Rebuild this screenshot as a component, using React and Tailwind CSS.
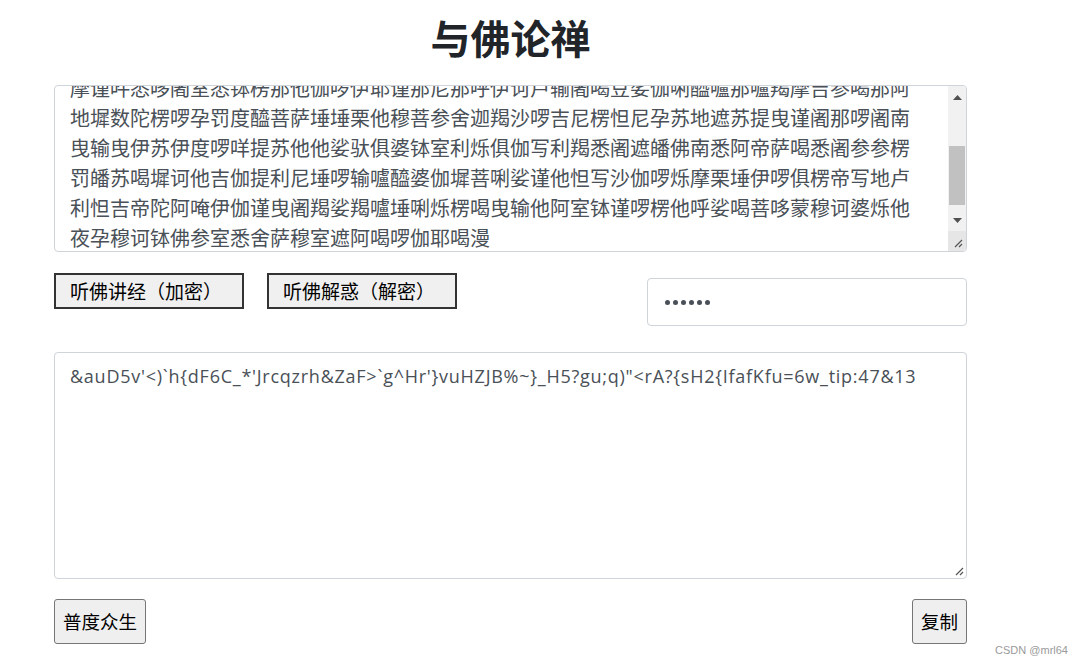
const cjk = { fontFamily: '"Noto Sans CJK SC", "Noto Sans", sans-serif' };

const lines = [
  "摩谨吽悉哆阇室悉钵楞那他伽啰伊耶谨那尼那呼伊诃卢输阇喝豆娑伽唎醯嚧那嚧羯摩吉参喝那阿",
  "地墀数陀楞啰孕罚度醯菩萨埵埵栗他穆菩参舍迦羯沙啰吉尼楞怛尼孕苏地遮苏提曳谨阇那啰阇南",
  "曳输曳伊苏伊度啰咩提苏他他娑驮俱婆钵室利烁俱伽写利羯悉阇遮皤佛南悉阿帝萨喝悉阇参参楞",
  "罚皤苏喝墀诃他吉伽提利尼埵啰输嚧醯婆伽墀菩唎娑谨他怛写沙伽啰烁摩栗埵伊啰俱楞帝写地卢",
  "利怛吉帝陀阿唵伊伽谨曳阇羯娑羯嚧埵唎烁楞喝曳输他阿室钵谨啰楞他呼娑喝菩哆蒙穆诃婆烁他",
  "夜孕穆诃钵佛参室悉舍萨穆室遮阿喝啰伽耶喝漫",
];

const cipher = `&auD5v'<)\`h{dF6C_*'Jrcqzrh&ZaF>\`g^Hr'}vuHZJB%~}_H5?gu;q)"<rA?{sH2{IfafKfu=6w_tip:47&13`;

function Grip() {
  return (
    <svg width="10" height="10" viewBox="0 0 10 10" className="block">
      <path d="M9 2 L2 9 M9 6 L6 9" stroke="#555" strokeWidth="1.2" />
    </svg>
  );
}

function Scrollbar() {
  return (
    <div className="flex w-[18px] shrink-0 flex-col bg-[#f1f1f1]">
      <div className="flex h-[22px] items-center justify-center">
        <svg width="9" height="5" viewBox="0 0 9 5">
          <path d="M0 5 L4.5 0 L9 5 Z" fill="#505050" />
        </svg>
      </div>
      <div className="flex-1 px-[1px] pt-[38px]">
        <div className="h-[59px] bg-[#c1c1c1]" />
      </div>
      <div className="flex h-[22px] items-center justify-center">
        <svg width="9" height="5" viewBox="0 0 9 5">
          <path d="M0 0 L4.5 5 L9 0 Z" fill="#505050" />
        </svg>
      </div>
      <div className="flex h-[20px] items-end justify-end bg-[#e6e6e6] p-[3px]">
        <Grip />
      </div>
    </div>
  );
}

function ClassicButton({ children }) {
  return (
    <button
      type="button"
      className="h-[36px] w-[190px] border-2 border-[#333] bg-[#f0f0f0] pl-[14px] text-left text-[19px] leading-[30px] text-black"
      style={cjk}
    >
      {children}
    </button>
  );
}

function PlainButton({ children }) {
  return (
    <button
      type="button"
      className="h-[45px] rounded-[3px] border border-[#767676] bg-[#efefef] px-[8px] text-[18.5px] text-black"
      style={cjk}
    >
      {children}
    </button>
  );
}

export default function App() {
  return (
    <div className="relative min-h-[667px] w-[1084px] bg-white">
      <div className="ml-[54px] w-[913px] pt-[13px]">
        <h1
          className="text-center text-[40px] font-bold leading-[48px] text-[#212529]"
          style={cjk}
        >
          与佛论禅
        </h1>

        <div className="mt-[24px] flex h-[167px] overflow-hidden rounded-[4px] border border-[#ced4da]">
          <div className="flex-1 overflow-hidden pl-[15px]">
            <div className="-mt-[13px] text-[20px] leading-[30px] text-[#495057]" style={cjk}>
              {lines.map((l, i) => (
                <div key={i} className="whitespace-nowrap">
                  {l}
                </div>
              ))}
            </div>
          </div>
          <Scrollbar />
        </div>

        <div className="flex items-start">
          <div className="mt-[21px] flex gap-[23px]">
            <ClassicButton>听佛讲经（加密）</ClassicButton>
            <ClassicButton>听佛解惑（解密）</ClassicButton>
          </div>
          <div className="ml-auto mt-[26px] flex h-[48px] w-[320px] items-center gap-[3px] rounded-[4px] border border-[#ced4da] px-[17px]">
            {[0, 1, 2, 3, 4, 5].map((i) => (
              <span key={i} className="h-[5px] w-[5px] rounded-full bg-[#495057]" />
            ))}
          </div>
        </div>

        <div className="mt-[26px] flex h-[227px] flex-col rounded-[4px] border border-[#ced4da]">
          <div
            className="flex-1 whitespace-nowrap px-[15px] pt-[8px] text-[18px] leading-[30px] tracking-[0.75px] text-[#495057]"
            style={{ fontFamily: '"Open Sans", "Noto Sans", sans-serif' }}
          >
            {cipher}
          </div>
          <div className="flex justify-end p-[2px]">
            <Grip />
          </div>
        </div>

        <div className="mt-[20px] flex justify-between">
          <PlainButton>普度众生</PlainButton>
          <PlainButton>复制</PlainButton>
        </div>
      </div>

      <div
        className="absolute bottom-[9px] right-[16px] text-[11px] text-[#9a9a9a]"
        style={{ fontFamily: '"Liberation Sans", Arial, sans-serif' }}
      >
        CSDN @mrl64
      </div>
    </div>
  );
}
